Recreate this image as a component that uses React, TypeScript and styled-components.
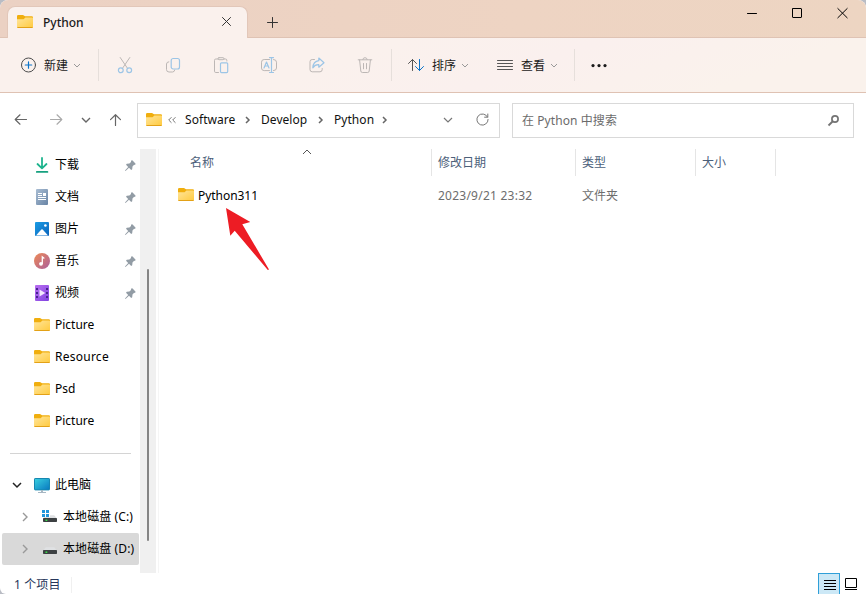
import React from "react";
import styled, { createGlobalStyle } from "styled-components";

const Global = createGlobalStyle`
  html, body { margin: 0; padding: 0; overflow: hidden; background: #b9bcc4; }
  * { box-sizing: border-box; }
  svg { display: block; flex: none; overflow: visible; }
`;

const Window = styled.div`
  width: 866px;
  height: 594px;
  display: flex;
  flex-direction: column;
  background: #fff;
  border-radius: 8px 8px 0 6px;
  overflow: hidden;
  font-family: "Noto Sans", "Noto Sans CJK SC", sans-serif;
  font-size: 12px;
  line-height: 16px;
  color: #1a1a1a;
  white-space: nowrap;
`;

const TitleBar = styled.header`
  height: 38px;
  flex: none;
  display: flex;
  padding-left: 7px;
  background: linear-gradient(90deg, #ebd1c3, #eed4c3 60%, #edd5c2);
  box-shadow: inset 0 -1px #dfc3b4;
`;

const Tab = styled.div`
  width: 241px;
  height: 32px;
  margin-top: 6px;
  padding: 1px 16px 0 9px;
  display: flex;
  align-items: center;
  background: #faf1ed;
  border: 1px solid #e2c7b9;
  border-bottom: 0;
  border-radius: 8px 8px 0 0;
`;

const TabTitle = styled.span`
  flex: 1;
  margin-left: 10px;
  font-weight: 500;
`;

const TabClose = styled.span`
  margin-bottom: 3px;
`;

const NewTab = styled.div`
  margin: 17px 0 0 19px;
`;

const Captions = styled.div`
  display: flex;
  margin: 8px 18px 0 auto;
  gap: 35px;
`;

const Toolbar = styled.div`
  height: 55px;
  flex: none;
  display: flex;
  align-items: center;
  padding-left: 21px;
  background: linear-gradient(160deg, #faf1ed, #faf1ed 40%, #faf0ee 60%, #faf2ec 85%);
  border-bottom: 1px solid #dfc2b3;
`;

const Command = styled.div<{ $gap?: number; $before?: number }>`
  display: flex;
  align-items: center;
  margin-left: ${(p) => p.$before ?? 0}px;

  > span {
    width: 24px;
    padding-top: 2px;
    margin: 0 6px 0 ${(p) => p.$gap ?? 8}px;
  }
`;

const Divider = styled.i<{ $before: number }>`
  width: 1px;
  height: 32px;
  margin-left: ${(p) => p.$before}px;
  background: #e6dfdb;
`;

const IconButton = styled.div`
  width: 48px;
  display: flex;
  justify-content: center;
`;

const IconGroup = styled.div`
  display: flex;
  margin-left: 2px;
`;

const AddressRow = styled.div`
  height: 54px;
  flex: none;
  display: flex;
  align-items: flex-start;
  padding: 10px 12px 0 14px;
`;

const NavButtons = styled.div`
  width: 123px;
  height: 34px;
  display: flex;
  align-items: center;
`;

const NavSlot = styled.div<{ $w: number }>`
  width: ${(p) => p.$w}px;
  display: flex;
`;

const Field = styled.div<{ $w: number; $before?: number }>`
  width: ${(p) => p.$w}px;
  height: 35px;
  margin-left: ${(p) => p.$before ?? 0}px;
  display: flex;
  align-items: center;
  border: 1px solid #d9d9d9;
  padding: 0 8px;
`;

const Crumbs = styled.div`
  flex: 1;
  display: flex;
  align-items: center;
  margin: 0 0 1px 6px;
`;

const Crumb = styled.span<{ $w: number; $before?: number }>`
  width: ${(p) => p.$w}px;
  margin-left: ${(p) => p.$before ?? 12}px;
  letter-spacing: 0.05px;
  color: #111;
`;

const FieldTools = styled.div`
  display: flex;
  align-items: center;
  gap: 24px;
  margin: 0 2px 2px 0;
`;

const Placeholder = styled.span`
  flex: 1;
  margin-left: 1px;
  letter-spacing: 0.08px;
  color: #6b6b6b;
`;

const SearchSlot = styled.span`
  margin-right: 6px;
`;

const Body = styled.div`
  height: 426px;
  flex: none;
  display: flex;
`;

const Sidebar = styled.nav`
  width: 140px;
  padding-top: 2px;
`;

const Item = styled.div<{ $selected?: boolean }>`
  height: 32px;
  margin: 0 1px 0 2px;
  padding: 0 3px 0 8px;
  display: flex;
  align-items: center;
  color: #000;
  border-radius: 2px;
  background: ${(p) => (p.$selected ? "#d9d9d9" : "transparent")};
`;

const Twisty = styled.span<{ $w: number }>`
  width: ${(p) => p.$w}px;
  flex: none;
  display: flex;
  justify-content: center;
  margin-right: ${(p) => 24 - p.$w}px;
`;

const ItemIcon = styled.span<{ $child?: boolean }>`
  width: 16px;
  flex: none;
  margin-left: ${(p) => (p.$child ? 8 : 0)}px;
  display: flex;
  justify-content: center;
`;

const ItemName = styled.span<{ $spacing?: number }>`
  flex: 1;
  margin-left: 5px;
  letter-spacing: ${(p) => p.$spacing ?? 0}px;
`;

const Rule = styled.hr`
  height: 1px;
  border: 0;
  margin: 16px 9px 15px 10px;
  background: #d4d4d4;
`;

const ScrollTrack = styled.div`
  width: 16px;
  margin-top: 2px;
  padding: 120px 7px 0;
  background: #f0f0f0;
`;

const ScrollThumb = styled.div`
  width: 2px;
  height: 272px;
  border-radius: 1px;
  background: #858585;
`;

const Content = styled.main`
  position: relative;
  flex: 1;
  margin: 2px 0 0 2px;
  border-left: 1px solid #f5f5f5;
`;

const columns = "273px 144px 120px 80px";

const HeaderRow = styled.div`
  position: relative;
  display: grid;
  grid-template-columns: ${columns};
  height: 27px;
  color: #4c607a;
`;

const HeaderCell = styled.div<{ $pad?: number }>`
  padding: 6px 0 0 ${(p) => p.$pad ?? 6}px;
  border-right: 1px solid #e5e5e5;
`;

const SortMark = styled.span`
  position: absolute;
  left: 144px;
  top: 1px;
`;

const FileRow = styled.div`
  display: grid;
  grid-template-columns: ${columns};
  height: 32px;
  margin-top: 4px;
  align-items: center;
  color: #6d6d6d;
`;

const FileName = styled.div`
  display: flex;
  align-items: center;
  padding-left: 19px;
  gap: 4px;
  letter-spacing: -0.05px;
  color: #000;
`;

const Meta = styled.div<{ $spacing?: number }>`
  padding-left: 6px;
  letter-spacing: ${(p) => p.$spacing ?? 0}px;
`;

const Lifted = styled.span<{ $by: number }>`
  margin-bottom: ${(p) => p.$by}px;
`;

const Pointer = styled.span`
  position: absolute;
  left: 67px;
  top: 59px;
`;

const StatusBar = styled.footer`
  flex: 1;
  display: flex;
  align-items: flex-start;
  padding-left: 14px;
  color: #26365a;
`;

const StatusText = styled.span`
  width: 58px;
  margin-top: 4px;
  letter-spacing: 0.1px;
  border-right: 1px solid #f0f0f0;
`;

const Views = styled.div`
  margin: 0 4px 0 auto;
  display: flex;
`;

const ViewButton = styled.div<{ $active?: boolean }>`
  width: 22px;
  height: 22px;
  display: flex;
  justify-content: center;
  padding: ${(p) => (p.$active ? "6px 0 0 2px" : "5px 0 0")};
  border: ${(p) => (p.$active ? "1px solid #2f9fd8" : "0")};
  background: ${(p) => (p.$active ? "#cce8f6" : "#fff")};
`;

const Folder = () => (
  <svg width="16" height="14" viewBox="0 0 16 14">
    <defs>
      <linearGradient id="folder" x1="0" y1="0" x2="1" y2="1">
        <stop offset="0" stopColor="#ffe59b" />
        <stop offset="1" stopColor="#ffca3e" />
      </linearGradient>
    </defs>
    <path d="M0 1.2Q0 0 1.2 0H6L8 1.2H14.8Q16 1.2 16 2.4V8H0Z" fill="#f0ae0e" />
    <path d="M0 4.2H6.6L8.4 2.5H15.2Q16 2.5 16 3.3V11.8Q16 13 14.8 13H1.2Q0 13 0 11.8Z" fill="url(#folder)" />
    <path d="M.4 12.5H15.6" fill="none" stroke="#e3a117" />
  </svg>
);

type ChevronProps = { w?: number; h?: number; dir?: "down" | "up" | "right"; color?: string; weight?: number };
const Chevron = ({ w = 6, h = 3, dir = "down", color = "#999", weight = 1 }: ChevronProps) => {
  const d = {
    down: `M0 0L${w / 2} ${h}L${w} 0`,
    up: `M0 ${h}L${w / 2} 0L${w} ${h}`,
    right: `M0 0L${w} ${h / 2}L0 ${h}`,
  }[dir];
  return (
    <svg width={w} height={h} fill="none" stroke={color} strokeWidth={weight}>
      <path d={d} />
    </svg>
  );
};

const GRAY = "#bcb7b5";
const BLUE = "#9cc5e6";

type StrokeProps = { children: React.ReactNode; w?: number; h?: number; color?: string; weight?: number };
const Stroke = ({ children, w = 16, h = 16, color = GRAY, weight = 1 }: StrokeProps) => (
  <svg width={w} height={h} viewBox={`0 0 ${w} ${h}`} fill="none" stroke={color} strokeWidth={weight} strokeLinecap="round" strokeLinejoin="round">
    {children}
  </svg>
);

const Cut = () => (
  <Stroke>
    <path d="M3.2.5L10.3 11M12.8.5L5.7 11" />
    <g stroke={BLUE} strokeWidth="1.2">
      <circle cx="3.8" cy="13.3" r="2.4" />
      <circle cx="12.2" cy="13.3" r="2.4" />
    </g>
  </Stroke>
);

const Copy = () => (
  <Stroke>
    <path d="M3.8 4.8Q1.5 5 1.5 7V12.5Q1.5 15 4 15H7.5Q9.5 15 9.8 13" />
    <rect x="6.2" y="1.5" width="8.3" height="10.5" rx="2" stroke={BLUE} strokeWidth="1.2" />
  </Stroke>
);

const Paste = () => (
  <Stroke>
    <path d="M5 2H2.8Q1.5 2 1.5 3.3V14.2Q1.5 15.5 2.8 15.5H5.5M11 2H12.5Q13.8 2 13.8 3.3V4" />
    <rect x="5" y=".7" width="6" height="2" rx="1" />
    <rect x="7.5" y="5.8" width="7.2" height="9.8" rx="1" stroke={BLUE} strokeWidth="1.2" />
  </Stroke>
);

const Rename = () => (
  <Stroke>
    <path d="M8.5 2.5H3.2Q.5 2.5 .5 5.2V11Q.5 13.6 3.2 13.6H8.5M12.5 2.5Q15.5 2.5 15.5 5.2V11Q15.5 13.6 12.5 13.6" />
    <g stroke={BLUE} strokeWidth="1.2">
      <path d="M3 11L5.5 5L8 11M3.9 9H7.1M10.5 .8V15.4M8.5 .6H12.5M8.5 15.5H12.5" />
    </g>
  </Stroke>
);

const Share = () => (
  <Stroke>
    <path d="M5.5 2.5H3.2Q1 2.5 1 4.7V12.5Q1 14.8 3.2 14.8H11Q13.2 14.8 13.2 12.5V11.5" />
    <path d="M9.8 1L15 5.7L9.8 10.2V7.7Q6 7.5 3.8 10.8Q4.2 4.4 9.8 3.7Z" stroke={BLUE} strokeWidth="1.2" />
  </Stroke>
);

const Trash = () => (
  <Stroke>
    <path d="M1.2 2.8H14.8M5.8 2.5Q6 .7 8 .7Q10 .7 10.2 2.5M2.6 3L3.8 14Q4 15.5 5.3 15.5H10.7Q12 15.5 12.2 14L13.4 3M6.5 6.5V11.8M9.5 6.5V11.8" />
  </Stroke>
);

const Pin = () => (
  <svg width="11" height="11" viewBox="0 0 11 11" fill="#929ca5">
    <path d="M6.3.6Q7 0 7.6.6L10.4 3.4Q11 4 10.3 4.6L8.6 5.2L7.5 6.6L7.2 9.2L6.2 10L4 7.7L.8 10.8L.1 10.9L.2 10.2L3.2 7L1 4.7L1.8 3.8L4.4 3.4L5.8 2.3Z" />
  </svg>
);

const Download = () => (
  <svg width="14" height="16" viewBox="0 0 14 16" fill="none" stroke="#1eb48e" strokeWidth="1.8" strokeLinecap="round" strokeLinejoin="round">
    <path d="M7 1V11M2.5 7L7 11.3L11.5 7" />
    <path d="M1.8 14.9H12.4" stroke="#16a07f" />
  </svg>
);

const Document = () => (
  <svg width="12" height="16" viewBox="0 0 12 16">
    <defs>
      <linearGradient id="doc" x1="0" y1="0" x2="1" y2="1">
        <stop stopColor="#a9bdd3" />
        <stop offset="1" stopColor="#6884a5" />
      </linearGradient>
    </defs>
    <rect width="12" height="16" rx="1" fill="url(#doc)" />
    <path d="M2 4.5H6M2 6.5H6M2 8.5H10M2 10.5H10" stroke="#fff" />
    <rect x="7" y="4" width="3" height="3" fill="#fff" />
  </svg>
);

const Pictures = () => (
  <svg width="14" height="14" viewBox="0 0 14 14">
    <defs>
      <linearGradient id="pic" x1="0" y1="0" x2="1" y2="1">
        <stop stopColor="#1a9ce4" />
        <stop offset="1" stopColor="#0a63bc" />
      </linearGradient>
    </defs>
    <rect width="14" height="14" rx="1" fill="url(#pic)" />
    <path d="M1 13.6L6.3 7.5Q7 6.8 7.7 7.5L13 13.6Z" fill="#fff" />
    <circle cx="10.4" cy="3.5" r="1.3" fill="#fff" />
  </svg>
);

const Music = () => (
  <svg width="16" height="16" viewBox="0 0 16 16">
    <defs>
      <linearGradient id="music" x1="0" y1="0" x2="1" y2="1">
        <stop stopColor="#ee8a55" />
        <stop offset="1" stopColor="#aa5f9d" />
      </linearGradient>
    </defs>
    <circle cx="8" cy="8" r="8" fill="url(#music)" />
    <circle cx="7" cy="10.8" r="1.9" fill="#fff" />
    <path d="M8.3 11V3.8L10.3 5.4" fill="none" stroke="#fff" strokeWidth="1.3" />
  </svg>
);

const Video = () => (
  <svg width="14" height="16" viewBox="0 0 14 16">
    <defs>
      <linearGradient id="video" x1="0" y1="0" x2="1" y2="1">
        <stop stopColor="#b96ef0" />
        <stop offset="1" stopColor="#8043e0" />
      </linearGradient>
    </defs>
    <rect width="14" height="16" rx="1" fill="url(#video)" />
    <path d="M1 3h2v2h-2zM1 7h2v2h-2zM1 11h2v2h-2zM11 3h2v2h-2zM11 7h2v2h-2zM11 11h2v2h-2z" fill="#47238f" />
    <path d="M4.5 4.5L10.3 8L4.5 11.5Z" fill="#f2e9fd" />
  </svg>
);

const Computer = () => (
  <svg width="16" height="15" viewBox="0 0 16 15">
    <defs>
      <linearGradient id="pc" x1="0" y1="0" x2="1" y2="1">
        <stop stopColor="#3ad1e0" />
        <stop offset="1" stopColor="#0878c0" />
      </linearGradient>
    </defs>
    <rect x=".5" y=".5" width="15" height="11.4" rx=".6" fill="url(#pc)" stroke="#1687b0" />
    <path d="M7 12h2v2h3v1H4v-1h3z" fill="#a7b7c3" />
  </svg>
);

const Drive = ({ system }: { system?: boolean }) => (
  <svg width="14" height="14" viewBox="0 0 14 14">
    <path d="M2.8 5.2H11.2L13.5 8H.5Z" fill="#dfe1e3" />
    <rect y="8" width="14" height="4" rx=".7" fill="#3c4042" />
    <path d="M2.5 10.3h1.8" stroke="#39dd48" strokeWidth="1.4" />
    {system && (
      <>
        <path d="M-1 0h8v7h-8z" fill="#fff" />
        <path d="M-1 0h3v3h-3zM3 0h3v3h-3zM-1 4h3v3h-3zM3 4h3v3h-3z" fill="#2196dc" />
      </>
    )}
  </svg>
);

const Search = () => (
  <svg width="11" height="11" viewBox="0 0 11 11" fill="none" stroke="#747474">
    <circle cx="7" cy="4" r="3.1" strokeWidth="1.7" />
    <path d="M4.8 6.3L.5 10.5" strokeWidth="1.9" />
  </svg>
);

const quickAccess = [
  { name: "下载", icon: <Download />, pinned: true },
  { name: "文档", icon: <Document />, pinned: true },
  { name: "图片", icon: <Pictures />, pinned: true },
  { name: "音乐", icon: <Music />, pinned: true },
  { name: "视频", icon: <Video />, pinned: true },
  { name: "Picture", icon: <Folder /> },
  { name: "Resource", icon: <Folder />, spacing: 0.25 },
  { name: "Psd", icon: <Folder /> },
  { name: "Picture", icon: <Folder /> },
];

const drives = [
  { name: "本地磁盘 (C:)", system: true, selected: false },
  { name: "本地磁盘 (D:)", system: false, selected: true },
];

const path = [
  { name: "Software", width: 61, before: 9 },
  { name: "Develop", width: 58, before: 12 },
  { name: "Python", width: 49, before: 12 },
];

const editIcons = [Cut, Copy, Paste, Rename, Share, Trash];

export default function App() {
  return (
    <Window>
      <Global />
      <TitleBar>
        <Tab>
          <Lifted $by={2}><Folder /></Lifted>
          <TabTitle>Python</TabTitle>
          <TabClose>
            <Stroke w={9} h={9} color="#333">
              <path d="M.5 .5L8.5 8.5M8.5 .5L.5 8.5" />
            </Stroke>
          </TabClose>
        </Tab>
        <NewTab>
          <Stroke w={11} h={11} color="#333">
            <path d="M5.5 .5V10.5M.5 5.5H10.5" />
          </Stroke>
        </NewTab>
        <Captions>
          <Stroke w={10} h={10} color="#000"><path d="M.5 5.5H9.5" /></Stroke>
          <Stroke w={10} h={10} color="#000"><rect x=".5" y=".5" width="9" height="9" rx=".5" /></Stroke>
          <Stroke w={11} h={10} color="#000"><path d="M.8 .5L10.2 9.8M10.2 .5L.8 9.8" /></Stroke>
        </Captions>
      </TitleBar>

      <Toolbar>
        <Command $gap={8}>
          <Stroke w={15} h={15} color="#4d4d4d">
            <circle cx="7.5" cy="7" r="7" />
            <path d="M7.5 3.8V10.2M4.3 7H10.7" stroke="#0b74c9" strokeWidth="1.2" />
          </Stroke>
          <span>新建</span>
          <Chevron />
        </Command>
        <Divider $before={18} />
        <IconGroup>
          {editIcons.map((Icon, i) => (
            <IconButton key={i}><Icon /></IconButton>
          ))}
        </IconGroup>
        <Divider $before={2} />
        <Command $before={16}>
          <Stroke w={16} h={12} color="#555">
            <path d="M4.5 11.5V.5M.5 4.5L4.5 .5L8.5 4.5" />
            <path d="M11.5 .5V11.5M7.5 7.5L11.5 11.5L15.5 7.5" stroke="#0b74c9" />
          </Stroke>
          <span>排序</span>
          <Chevron />
        </Command>
        <Command $before={29}>
          <Stroke w={16} h={10} color="#555"><path d="M.5 .5H15.5M.5 3.5H15.5M.5 6.5H15.5M.5 9.5H15.5" /></Stroke>
          <span>查看</span>
          <Chevron />
        </Command>
        <Divider $before={17} />
        <Command $before={16}>
          <svg width="16" height="4" fill="#1a1a1a">
            <circle cx="2" cy="2.6" r="1.6" />
            <circle cx="8" cy="2.6" r="1.6" />
            <circle cx="14" cy="2.6" r="1.6" />
          </svg>
        </Command>
      </Toolbar>

      <AddressRow>
        <NavButtons>
          <NavSlot $w={36}>
            <Stroke w={13} h={12} color="#666" weight={1.2}><path d="M1.5 5.5H12.5M6 .8L1.2 5.5L6 10.2" /></Stroke>
          </NavSlot>
          <NavSlot $w={32}>
            <Stroke w={13} h={12} color="#aaa" weight={1.2}><path d="M.5 5.5H11.5M7 .8L11.8 5.5L7 10.2" /></Stroke>
          </NavSlot>
          <NavSlot $w={28}><Chevron w={8} h={4} color="#666" weight={1.4} /></NavSlot>
          <Stroke w={11} h={12} color="#666" weight={1.2}><path d="M5.5 11.5V1M.5 5.6L5.5 .7L10.5 5.6" /></Stroke>
        </NavButtons>
        <Field $w={363}>
          <Lifted $by={1}><Folder /></Lifted>
          <Crumbs>
            <Stroke w={8} h={6} color="#777"><path d="M3.2 .5L.7 3L3.2 5.5M7.2 .5L4.7 3L7.2 5.5" /></Stroke>
            {path.map((p) => (
              <React.Fragment key={p.name}>
                <Crumb $w={p.width} $before={p.before}>{p.name}</Crumb>
                <Chevron w={3} h={6} dir="right" color="#666" weight={1.5} />
              </React.Fragment>
            ))}
          </Crumbs>
          <FieldTools>
            <Chevron w={8} h={4} color="#777" weight={1.2} />
            <Stroke w={13} h={13} color="#777"><path d="M11.5 4A5.6 5.6 0 1 0 12.1 6.5M11.8 1V4.2H8.6" /></Stroke>
          </FieldTools>
        </Field>
        <Field $w={342} $before={12}>
          <Placeholder>在 Python 中搜索</Placeholder>
          <SearchSlot><Search /></SearchSlot>
        </Field>
      </AddressRow>

      <Body>
        <Sidebar>
          {quickAccess.map((q, i) => (
            <Item key={i}>
              <Twisty $w={13} />
              <ItemIcon>{q.icon}</ItemIcon>
              <ItemName $spacing={q.spacing}>{q.name}</ItemName>
              {q.pinned && <Pin />}
            </Item>
          ))}
          <Rule />
          <Item>
            <Twisty $w={13}><Chevron w={8} h={4} color="#222" weight={1.5} /></Twisty>
            <ItemIcon><Computer /></ItemIcon>
            <ItemName>此电脑</ItemName>
          </Item>
          {drives.map((d) => (
            <Item key={d.name} $selected={d.selected}>
              <Twisty $w={29}><Chevron w={4} h={8} dir="right" color="#999" weight={1.4} /></Twisty>
              <ItemIcon $child><Drive system={d.system} /></ItemIcon>
              <ItemName $spacing={0.1}>{d.name}</ItemName>
            </Item>
          ))}
        </Sidebar>
        <ScrollTrack><ScrollThumb /></ScrollTrack>
        <Content>
          <HeaderRow>
            <HeaderCell $pad={31}>名称</HeaderCell>
            <HeaderCell>修改日期</HeaderCell>
            <HeaderCell>类型</HeaderCell>
            <HeaderCell>大小</HeaderCell>
            <SortMark><Chevron w={8} h={4} dir="up" color="#555" /></SortMark>
          </HeaderRow>
          <FileRow>
            <FileName>
              <Lifted $by={2}><Folder /></Lifted>
              Python311
            </FileName>
            <Meta $spacing={0.24}>2023/9/21 23:32</Meta>
            <Meta>文件夹</Meta>
          </FileRow>
          <Pointer>
            <svg width="44" height="63" viewBox="0 0 44 63">
              <path d="M0 0L24.3 14L16.3 16.3L43 61.5L41.8 62L8.7 22.7L4.3 27.7Z" fill="#ed1c24" />
            </svg>
          </Pointer>
        </Content>
      </Body>
      <StatusBar>
        <StatusText>1 个项目</StatusText>
        <Views>
          <ViewButton $active>
            <svg width="12" height="10" stroke="#000"><path d="M0 .5H12M0 3.5H12M0 6.5H12M0 9.5H12" /></svg>
          </ViewButton>
          <ViewButton>
            <svg width="12" height="12" stroke="#000" fill="none"><path d="M.5 .5H11.5V9.5H.5ZM0 11.5H12" /></svg>
          </ViewButton>
        </Views>
      </StatusBar>
    </Window>
  );
}
